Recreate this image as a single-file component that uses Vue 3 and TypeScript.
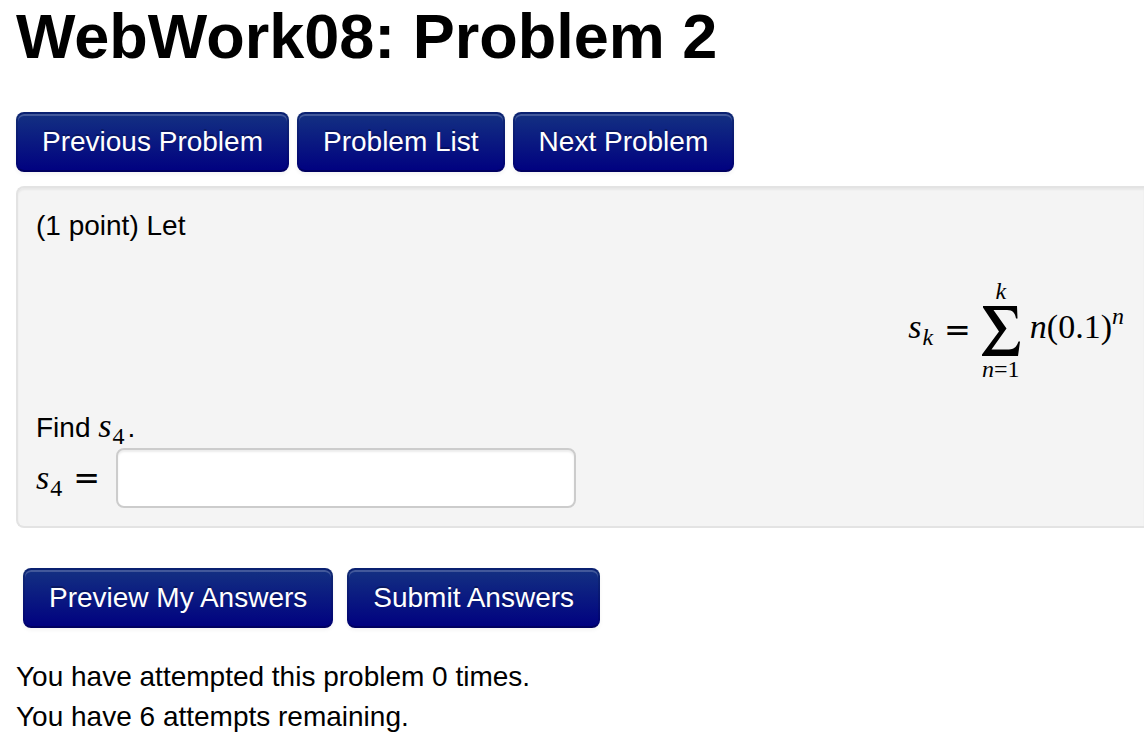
<script setup lang="ts">
import { ref } from 'vue'

const answer = ref('')
const attempted = ref(0)
const remaining = ref(6)

const navigation = ['Previous Problem', 'Problem List', 'Next Problem']
</script>

<template>
  <main class="page">
    <h1 class="title">WebWork08: Problem 2</h1>

    <nav class="nav" aria-label="Problems">
      <a v-for="label in navigation" :key="label" class="btn" href="#">{{ label }}</a>
    </nav>

    <form class="form" @submit.prevent>
      <section class="problem">
        <p class="line">(1 point) Let</p>

        <div class="display">
          <div class="equation math">
            <span class="term"><i>s</i><sub><i>k</i></sub></span>
            <span class="equals">=</span>
            <span class="sum">
              <i class="limit upper">k</i>
              <svg class="sigma" viewBox="0 0 38 50" role="img" aria-label="sum">
                <path d="M1 0H35L35.500 12.500H34C33 7 31 4 25 4H11.500L24.500 22.500L9.500 43.500H27C32 43.500 34.500 41 36.500 35.500H38L36 50H0V48.500L17 25.500L1 1.500Z" />
              </svg>
              <span class="limit"><i>n</i>=1</span>
            </span>
            <span class="term"><i>n</i>(0.1)<sup><i>n</i></sup></span>
          </div>
        </div>

        <p class="line">Find <span class="math"><i>s</i><sub>4</sub></span><span class="stop">.</span></p>
        <div class="answer">
          <label class="answer-label math" for="answer"><span><i>s</i><sub>4</sub></span><span class="equals">=</span></label>
          <input id="answer" v-model="answer" class="field" type="text" autocomplete="off" />
        </div>
      </section>

      <div class="actions">
        <button class="btn" type="button">Preview My Answers</button>
        <button class="btn" type="submit">Submit Answers</button>
      </div>
    </form>

    <p class="line">You have attempted this problem {{ attempted }} times.</p>
    <p class="line">You have {{ remaining }} attempts remaining.</p>
  </main>
</template>

<style>
body {
  margin: 0;
  background: #fff;
}
</style>

<style scoped>
.page {
  padding-left: 16px;
  color: #000;
  font-family: "Liberation Sans", Arial, sans-serif;
  font-size: 28px;
  line-height: 40px;
}

.title {
  margin: 0;
  padding-bottom: 40px;
  font-size: 63px;
  line-height: 72px;
  font-weight: 700;
  white-space: nowrap;
}

.nav {
  display: flex;
  gap: 8px;
}

.btn {
  box-sizing: border-box;
  padding: 8px 24px;
  border: 2px solid;
  border-color: rgba(0, 16, 96, 0.5) rgba(0, 0, 0, 0.1) rgba(0, 0, 0, 0.25);
  border-radius: 8px;
  background: linear-gradient(#143282, #000080) border-box;
  box-shadow: inset 0 2px 0 rgba(255, 255, 255, 0.2), 0 2px 4px rgba(0, 0, 0, 0.05);
  color: #fff;
  font: inherit;
  text-decoration: none;
  text-shadow: 0 -2px 0 rgba(0, 0, 0, 0.25);
  white-space: nowrap;
  cursor: pointer;
}

.problem {
  margin-top: 14px;
  padding: 18px;
  border: 2px solid #e3e3e3;
  border-right: 0;
  border-radius: 8px 0 0 8px;
  background: #f4f4f4;
  box-shadow: inset 0 2px 2px rgba(0, 0, 0, 0.05);
}

.line {
  margin: 0;
}

.math {
  font-family: "Liberation Serif", "Times New Roman", serif;
  font-size: 34px;
}

.math sub,
.math sup {
  font-size: 24px;
  line-height: 0;
}

.math sub {
  margin-left: 1px;
  vertical-align: -7px;
}

.math sup {
  vertical-align: 14px;
}

.line .math {
  line-height: 0;
}

.stop {
  margin-left: 3px;
}

.display {
  display: flex;
  justify-content: flex-end;
  padding: 32px 2px 26px 0;
}

.equation {
  display: flex;
  align-items: center;
}

.equals {
  margin: 0 11px;
  font-family: "DejaVu Sans", sans-serif;
  font-size: 32px;
}

.sum {
  display: flex;
  flex-direction: column;
  align-items: center;
  margin-right: 10px;
}

.term {
  padding-bottom: 6px;
}

.limit {
  font-size: 24px;
  line-height: 26px;
}

.upper {
  margin-bottom: 2px;
}

.sigma {
  width: 38px;
  height: 50px;
}

.answer {
  display: flex;
  align-items: center;
}

.answer-label {
  display: flex;
  align-items: center;
}

.field {
  box-sizing: border-box;
  width: 460px;
  height: 60px;
  margin-left: 5px;
  padding: 8px 12px;
  border: 2px solid #ccc;
  border-radius: 8px;
  background: #fff;
  box-shadow: inset 0 2px 2px rgba(0, 0, 0, 0.075);
  color: #555;
  font: inherit;
}

.actions {
  display: flex;
  gap: 14px;
  padding: 40px 7px 29px;
}
</style>
